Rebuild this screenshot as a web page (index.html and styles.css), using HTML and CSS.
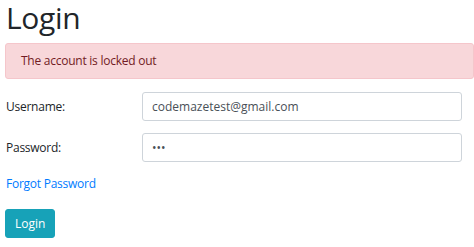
FILE: index.html
```html
<!DOCTYPE html>
<html lang="en">
<head>
<meta charset="utf-8">
<title>Login</title>
<link rel="stylesheet" href="styles.css">
</head>
<body>
<main class="container">
  <h1 class="title">Login</h1>
  <div class="alert">The account is locked out</div>
  <form class="form">
    <div class="form-row">
      <label class="label" for="username">Username:</label>
      <input class="input" id="username" type="text" value="codemazetest@gmail.com">
    </div>
    <div class="form-row">
      <label class="label" for="password">Password:</label>
      <input class="input" id="password" type="text" value="•••">
    </div>
    <div class="link-row"><a class="link" href="#">Forgot Password</a></div>
    <button class="btn" type="button">Login</button>
  </form>
</main>
</body>
</html>
```
FILE: styles.css
```css
* { box-sizing: border-box; }
html, body { margin: 0; padding: 0; background: #fff; }
body {
  font-family: "Open Sans", "Noto Sans", sans-serif;
  font-size: 12px;
  line-height: 18px;
  letter-spacing: -0.25px;
  color: #212529;
}
.container {
  margin-left: 5px;
  width: 469px;
}
.title {
  margin: 0 0 9px 1px;
  padding-top: 1px;
  font-size: 30px;
  line-height: 33px;
  font-weight: 500;
  letter-spacing: -0.3px;
  color: #212529;
}
.alert {
  background: #f8d7da;
  border: 1px solid #f5c6cb;
  color: #721c24;
  border-radius: 3px;
  padding: 8px 15px;
  margin-bottom: 13px;
  height: 36px;
}
.form-row {
  display: grid;
  grid-template-columns: 137px 320px;
  align-items: center;
  margin-bottom: 12px;
}
.label { padding-left: 1px; }
.input {
  height: 29px;
  border: 1px solid #ced4da;
  border-radius: 3px;
  padding: 0 9px;
  font: inherit;
  color: #495057;
  background: #fff;
}
.link-row { margin: 13px 0 16px 1px; }
.link { color: #007bff; text-decoration: none; }
.btn {
  display: block;
  height: 29px;
  padding: 0 9px;
  border: 1px solid #17a2b8;
  background: #17a2b8;
  color: #fff;
  font: inherit;
  border-radius: 3px;
}
```
